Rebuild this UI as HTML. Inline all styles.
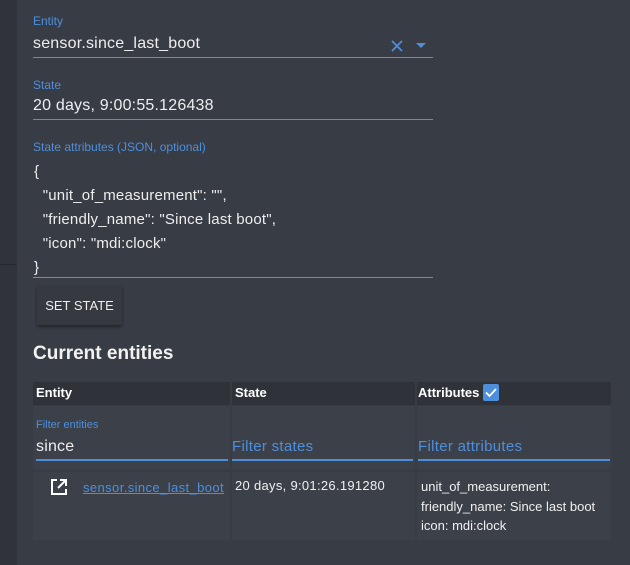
<!DOCTYPE html>
<html><head><style>
*{margin:0;padding:0;box-sizing:border-box}
body{width:630px;height:565px;background:#383c45;font-family:"Liberation Sans",sans-serif;color:#e6e6e6;position:relative;overflow:hidden}
.side{position:absolute;left:0;top:0;width:17px;height:565px;background:#30333a}
.side:after{content:"";position:absolute;left:0;top:264px;width:17px;height:1px;background:#26282d}
.a{position:absolute;white-space:nowrap}
.lbl{color:#4e8fdc;font-size:12px}
.val{font-size:16px;color:#eee;letter-spacing:.2px}
.line{position:absolute;left:33px;width:400px;height:1px;background:#5590d8}
.btn{position:absolute;left:37px;top:286px;width:85px;height:39px;background:#363940;box-shadow:0 2px 3px rgba(0,0,0,.4);border-radius:2px;font-size:13px;color:#eee;text-align:center;line-height:39px}
.c{position:absolute;background:#3c4049}
.h{position:absolute;background:#2f3239;font-weight:bold;font-size:13px;color:#fff;padding-left:3px;line-height:21px}
.ul{position:absolute;height:2px;background:#4e8fdc}
</style></head><body>
<div class="side"></div>
<div class="a lbl" style="left:33px;top:14px">Entity</div>
<div class="a val" style="left:33px;top:35px">sensor.since_last_boot</div>
<svg class="a" style="left:390px;top:39px" width="14" height="14" viewBox="0 0 14 14"><path d="M2 2L12 12M12 2L2 12" stroke="#4e8fdc" stroke-width="1.8"/></svg>
<svg class="a" style="left:416px;top:43px" width="10" height="6"><path d="M0 0H10L5 5Z" fill="#4e8fdc"/></svg>
<div class="line" style="top:57px"></div>
<div class="a lbl" style="left:33px;top:78px">State</div>
<div class="a val" style="left:33px;top:97px">20 days, 9:00:55.126438</div>
<div class="line" style="top:119px"></div>
<div class="a lbl" style="left:33px;top:140px">State attributes (JSON, optional)</div>
<div class="a val" style="left:34px;top:160px;font-size:15px;line-height:24px;white-space:pre">{
  "unit_of_measurement": "",
  "friendly_name": "Since last boot",
  "icon": "mdi:clock"
}</div>
<div class="line" style="top:277px"></div>
<div class="btn">SET STATE</div>
<div class="a" style="left:33px;top:343px;font-size:19px;font-weight:bold;color:#f2f2f2">Current entities</div>
<div class="h" style="left:33px;top:382px;width:197px;height:23px">Entity</div>
<div class="h" style="left:232px;top:382px;width:183px;height:23px">State</div>
<div class="h" style="left:417px;top:382px;width:194px;height:23px;padding-left:1px">Attributes <span style="display:inline-block;width:16px;height:17px;background:#4e8fdc;border-radius:2px;vertical-align:-4px;position:relative"><svg width="16" height="17" style="position:absolute;left:0;top:0"><path d="M3 8.5L6.5 12L13 5" stroke="#fff" stroke-width="1.8" fill="none"/></svg></span></div>
<div class="c" style="left:33px;top:406px;width:197px;height:63px"></div>
<div class="c" style="left:232px;top:406px;width:183px;height:63px"></div>
<div class="c" style="left:417px;top:406px;width:194px;height:63px"></div>
<div class="a lbl" style="left:36px;top:419px;font-size:11px">Filter entities</div>
<div class="a val" style="left:36px;top:438px">since</div>
<div class="a" style="left:232px;top:438px;font-size:15px;color:#4e8fdc;letter-spacing:.3px">Filter states</div>
<div class="a" style="left:418px;top:438px;font-size:15px;color:#4e8fdc;letter-spacing:.3px">Filter attributes</div>
<div class="ul" style="left:36px;top:459px;width:192px"></div>
<div class="ul" style="left:232px;top:459px;width:181px"></div>
<div class="ul" style="left:418px;top:459px;width:192px"></div>
<div class="c" style="left:33px;top:472px;width:197px;height:68px"></div>
<div class="c" style="left:232px;top:472px;width:183px;height:68px"></div>
<div class="c" style="left:417px;top:472px;width:194px;height:68px"></div>
<svg class="a" style="left:50px;top:478px" width="18" height="18" viewBox="0 0 18 18"><path d="M7 2H2V16H16V11" stroke="#fff" stroke-width="2" fill="none"/><path d="M10 2H16V8M16 2L8 10" stroke="#fff" stroke-width="2" fill="none"/></svg>
<div class="a" style="left:83px;top:480px;font-size:13px;color:#4e8fdc;text-decoration:underline;letter-spacing:.4px">sensor.since_last_boot</div>
<div class="a" style="left:235px;top:478px;font-size:13px;color:#f0f0f0;letter-spacing:.3px">20 days, 9:01:26.191280</div>
<div class="a" style="left:421px;top:477px;font-size:13px;color:#f0f0f0;line-height:19.5px;white-space:pre">unit_of_measurement: 
friendly_name: Since last boot
icon: mdi:clock</div>
</body></html>
